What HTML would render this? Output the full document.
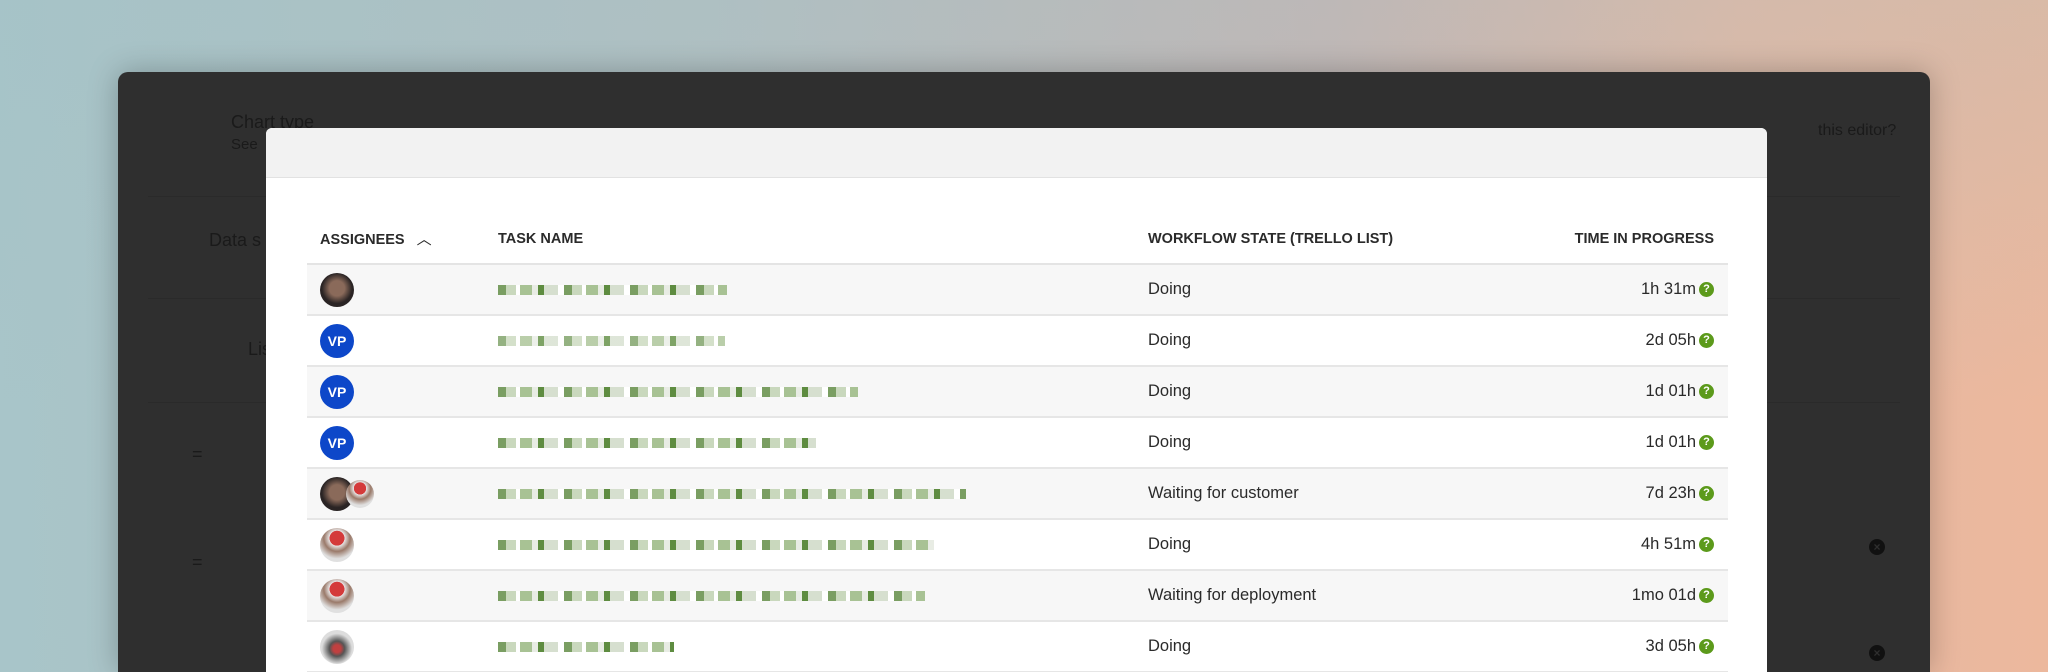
<!DOCTYPE html>
<html style="width:2048px;height:672px;overflow:hidden"><head><meta charset="utf-8"><style>
*{margin:0;padding:0;box-sizing:border-box}
body{width:2048px;height:672px;overflow:hidden;position:relative;font-family:"Liberation Sans",sans-serif;
background:linear-gradient(90deg,#a8c5c9 0%,#b3c0c2 35%,#c7b6b3 65%,#e6b9a3 85%,#ecb89d 100%);}
.bg2{position:absolute;inset:0;background:linear-gradient(180deg,rgba(160,190,195,0.25),rgba(255,255,255,0) 60%);}
.panel{position:absolute;left:118px;top:72px;width:1812px;height:600px;background:#2f2f2f;border-radius:10px 10px 0 0;box-shadow:0 0 30px rgba(0,0,0,0.25)}
.dt{position:absolute;color:#1a1a1a;font-size:18px}
.dl{position:absolute;height:1px;background:#2a2a2a}
.x{position:absolute;width:16px;height:16px;border-radius:50%;background:#111;color:#2f2f2f;font-size:12px;line-height:16px;text-align:center;font-weight:bold}
.modal{position:absolute;left:266px;top:128px;width:1501px;height:544px;background:#fff;border-radius:6px 6px 0 0;overflow:hidden}
.mh{height:50px;background:#f2f2f2;border-bottom:1px solid #e2e2e2}
table{position:absolute;left:41px;top:86px;width:1421px;border-collapse:collapse}
th{font-size:14.5px;font-weight:bold;color:#2a2a2a;text-align:left;height:50px;border-bottom:2px solid #e4e4e4;vertical-align:middle}
td{height:51px;border-bottom:2px solid #e6e6e6;font-size:16.5px;color:#2a2a2a;vertical-align:middle}
tr.o td{background:#f7f7f7}
.av{width:34px;height:34px;border-radius:50%;display:inline-block;vertical-align:middle;margin-left:13px}
.vp{background:#0d47c9;color:#fff;font-weight:bold;font-size:14px;line-height:34px;text-align:center}
.ph1{background:radial-gradient(circle at 50% 45%,#8a6a5a 0 30%,#2a2424 60%)}
.ph2{background:radial-gradient(circle at 50% 30%,#d43a3a 0 25%,#e8e4e4 26%,#9a7a6a 45%,#e0e0e0 70%)}
.ph3{background:radial-gradient(circle at 50% 55%,#c04040 0 15%,#555 30%,#ddd 60%)}
.bl{display:inline-block;height:10px;vertical-align:middle;
background:repeating-linear-gradient(90deg,#7a9e62 0 8px,#c9d8bd 8px 18px,#fff 18px 22px,#a8c294 22px 34px,#e8ece4 34px 40px,#5e8c40 40px 46px,#d6dfcf 46px 60px,#fff 60px 66px)}
.q{display:inline-block;width:15px;height:15px;border-radius:50%;background:#5c9a1b;color:#fff;font-size:11px;font-weight:bold;line-height:15px;text-align:center;vertical-align:middle;margin-left:3px}
.tp{text-align:right;padding-right:14px}
</style></head><body><div class="bg2"></div>
<div class="panel">
<div class="dt" style="left:113px;top:40px">Chart type</div>
<div class="dt" style="left:113px;top:64px;font-size:15px">See</div>
<div class="dl" style="left:30px;right:30px;top:124px"></div>
<div class="dt" style="left:91px;top:158px">Data s</div>
<div class="dl" style="left:30px;right:30px;top:226px"></div>
<div class="dt" style="left:130px;top:267px">Lis</div>
<div class="dl" style="left:30px;right:30px;top:330px"></div>
<div class="dt" style="left:1700px;top:50px;font-size:16px">this editor?</div>
<div class="dt" style="left:74px;top:372px">=</div>
<div class="dt" style="left:74px;top:480px">=</div>
<div class="x" style="left:1751px;top:467px">×</div>
<div class="x" style="left:1751px;top:573px">×</div>
</div>
<div class="modal"><div class="mh"></div>
<table>
<tr><th style="width:191px;padding-left:13px">ASSIGNEES <span style="font-weight:normal;font-size:15px;margin-left:8px">︿</span></th><th style="width:650px">TASK NAME</th><th>WORKFLOW STATE (TRELLO LIST)</th><th class="tp">TIME IN PROGRESS</th></tr>
<tr class="o"><td><span class="av ph1"></span></td><td><span class="bl" style="width:229px"></span></td><td>Doing</td><td class="tp">1h 31m<span class="q">?</span></td></tr>
<tr><td><span class="av vp">VP</span></td><td><span class="bl" style="width:227px;opacity:.8"></span></td><td>Doing</td><td class="tp">2d 05h<span class="q">?</span></td></tr>
<tr class="o"><td><span class="av vp">VP</span></td><td><span class="bl" style="width:360px"></span></td><td>Doing</td><td class="tp">1d 01h<span class="q">?</span></td></tr>
<tr><td><span class="av vp">VP</span></td><td><span class="bl" style="width:318px"></span></td><td>Doing</td><td class="tp">1d 01h<span class="q">?</span></td></tr>
<tr class="o"><td><span class="av ph1"></span><span class="av ph2" style="width:28px;height:28px;margin-left:-8px"></span></td><td><span class="bl" style="width:468px"></span></td><td>Waiting for customer</td><td class="tp">7d 23h<span class="q">?</span></td></tr>
<tr><td><span class="av ph2"></span></td><td><span class="bl" style="width:436px"></span></td><td>Doing</td><td class="tp">4h 51m<span class="q">?</span></td></tr>
<tr class="o"><td><span class="av ph2"></span></td><td><span class="bl" style="width:427px"></span></td><td>Waiting for deployment</td><td class="tp">1mo 01d<span class="q">?</span></td></tr>
<tr><td><span class="av ph3"></span></td><td><span class="bl" style="width:176px"></span></td><td>Doing</td><td class="tp">3d 05h<span class="q">?</span></td></tr>
</table></div>
</body></html>
